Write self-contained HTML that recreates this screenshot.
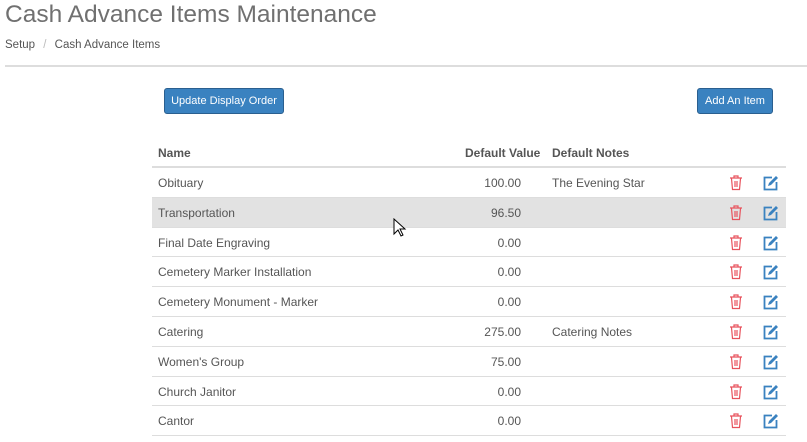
<!DOCTYPE html>
<html><head><style>
body{margin:0;width:807px;height:442px;background:#fff;font-family:"Liberation Sans",sans-serif;color:#555;position:relative;overflow:hidden}
.a{position:absolute;white-space:nowrap}
h1{position:absolute;left:5px;top:1px;margin:0;font-weight:normal;font-size:24.5px;color:#707070}
.btn{position:absolute;background:#3a82c0;border:1px solid #2a5f8f;border-radius:3px;color:#fff;font-size:11px;text-align:center;line-height:24px;height:24px}
.row{position:absolute;left:152px;width:634px;height:29px;border-top:1px solid #ddd;font-size:12px}
.row span{position:absolute;top:8px}
.n{left:6px}.v{right:265px;text-align:right}.d{left:400px}
.t{left:577px;top:7px!important}.e{left:611px;top:7px!important}
</style></head><body>
<h1>Cash Advance Items Maintenance</h1>
<div class="a" style="left:5px;top:39px;font-size:11.5px;color:#555">Setup <span style="color:#bbb;margin:0 5px">/</span> Cash Advance Items</div>
<div class="a" style="left:5px;top:65px;width:802px;height:2px;background:#ddd"></div>
<div class="btn" style="left:164px;top:88px;width:118px">Update Display Order</div>
<div class="btn" style="left:697px;top:88px;width:74px">Add An Item</div>
<div class="a" style="left:158px;top:146px;font-size:12px;font-weight:bold;color:#555">Name</div>
<div class="a" style="left:465px;top:146px;font-size:12px;font-weight:bold;color:#555">Default Value</div>
<div class="a" style="left:552px;top:146px;font-size:12px;font-weight:bold;color:#555">Default Notes</div>
<div class="a" style="left:152px;top:166px;width:634px;height:2px;background:#ddd"></div>
<div id="rows"></div>
<script>
var d=[["Obituary","100.00","The Evening Star"],["Transportation","96.50",""],["Final Date Engraving","0.00",""],["Cemetery Marker Installation","0.00",""],["Cemetery Monument - Marker","0.00",""],["Catering","275.00","Catering Notes"],["Women's Group","75.00",""],["Church Janitor","0.00",""],["Cantor","0.00",""]];
var trash='<svg width="14" height="16" viewBox="0 0 14 16"><path d="M1 3h12M5 3V1h4v2M2.5 3.5l1 11h7l1-11M6 6v6M8 6v6" fill="none" stroke="#e8525c" stroke-width="1.2"/></svg>';
var edit='<svg width="16" height="16" viewBox="0 0 16 16"><path d="M9 2.5H1.5v12h12V7" fill="none" stroke="#3a82c0" stroke-width="1.8"/><path d="M5 11l1-3 7-7 2 2-7 7z" fill="#3a82c0"/></svg>';
var h='';d.forEach(function(r,i){var top=167+i*29.8;h+='<div class="row" style="top:'+top+'px;'+(i==1?'background:#e2e2e2':'')+'"><span class="n">'+r[0]+'</span><span class="v">'+r[1]+'</span><span class="d">'+r[2]+'</span><span class="t">'+trash+'</span><span class="e">'+edit+'</span></div>';});
h+='<div class="row" style="top:435px;height:0"></div>';
document.getElementById('rows').innerHTML=h;
</script>
<svg class="a" style="left:393px;top:218px" width="14" height="20" viewBox="0 0 14 20"><path d="M1 1v15l4-4 3 6 2-1-3-6h5z" fill="#fff" stroke="#000" stroke-width="1"/></svg>
</body></html>
